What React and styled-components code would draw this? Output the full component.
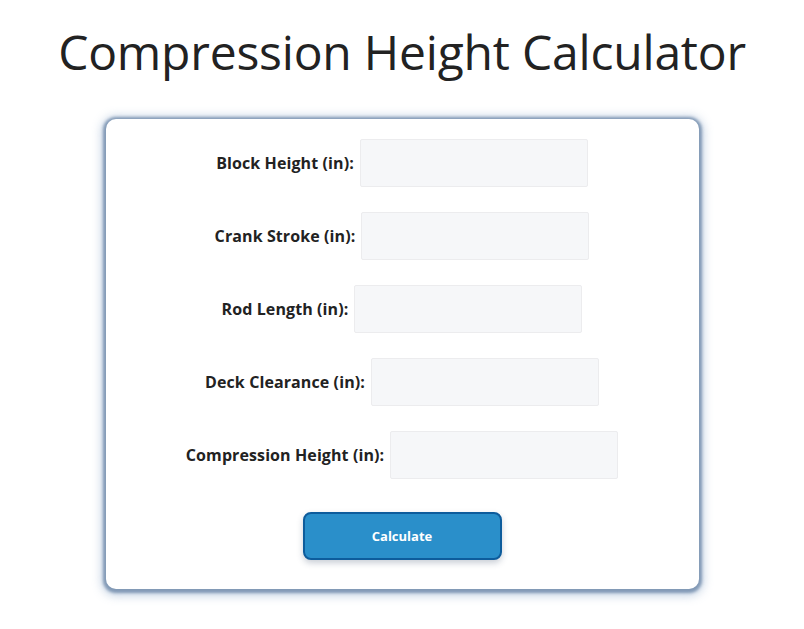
import React from "react";
import styled, { createGlobalStyle } from "styled-components";

const Global = createGlobalStyle`
  html, body { margin: 0; padding: 0; background: #ffffff; }
  body { font-family: "Open Sans", "Noto Sans", sans-serif; color: #222; }
`;

const Page = styled.div`
  display: flex;
  flex-direction: column;
  align-items: center;
  padding-top: 19px;
  padding-bottom: 20px;
`;

const Title = styled.h1`
  margin: 0 0 34px;
  font-size: 48px;
  font-weight: 400;
  line-height: 66px;
  color: #222;
  letter-spacing: -0.2px;
`;

const Card = styled.form`
  width: 593px;
  box-sizing: border-box;
  background: #fff;
  border-radius: 10px;
  box-shadow: 0 1px 3px 3px rgba(122, 146, 176, 0.9), 0 2px 10px 5px rgba(135, 165, 200, 0.45);
  padding: 20px 0 29px;
  display: flex;
  flex-direction: column;
  align-items: center;
  gap: 25px;
`;

const Row = styled.div`
  display: flex;
  align-items: center;
  justify-content: center;
  gap: 6px;
`;

const Label = styled.label`
  font-size: 16px;
  font-weight: 700;
  color: #222;
  letter-spacing: 0.1px;
`;

const Input = styled.input`
  width: 228px;
  height: 48px;
  box-sizing: border-box;
  background: #f6f7f9;
  border: 1px solid #ececee;
  border-radius: 2px;
  outline: none;
`;

const Button = styled.button`
  margin-top: 8px;
  width: 199px;
  height: 48px;
  background: #2a8fca;
  border: 2px solid #0d5c9c;
  border-radius: 8px;
  color: #fff;
  font-family: "Open Sans", sans-serif;
  font-size: 13px;
  font-weight: 700;
  box-shadow: 0 3px 6px rgba(40, 60, 90, 0.25);
  cursor: pointer;
`;

const fields = [
  "Block Height (in):",
  "Crank Stroke (in):",
  "Rod Length (in):",
  "Deck Clearance (in):",
  "Compression Height (in):",
];

export default function App() {
  return (
    <Page>
      <Global />
      <Title>Compression Height Calculator</Title>
      <Card onSubmit={(e) => e.preventDefault()}>
        {fields.map((f) => (
          <Row key={f}>
            <Label>{f}</Label>
            <Input type="text" />
          </Row>
        ))}
        <Button type="submit">Calculate</Button>
      </Card>
    </Page>
  );
}
